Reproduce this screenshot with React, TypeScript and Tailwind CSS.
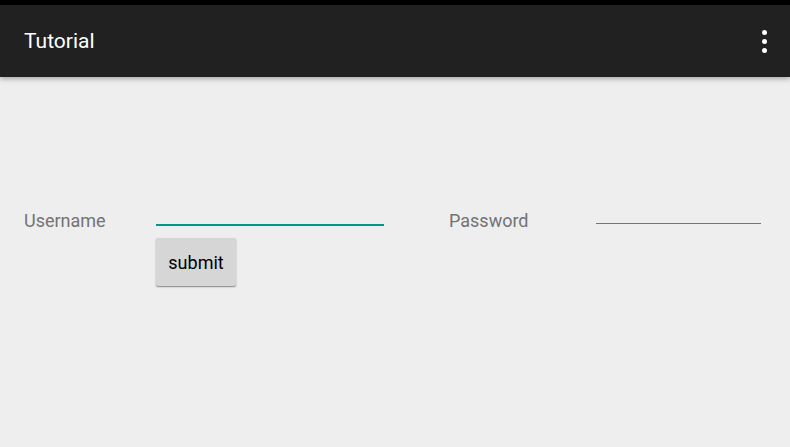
export default function App() {
  return (
    <div className="w-[790px] h-[447px] bg-[#eeeeee] overflow-hidden font-['Roboto',sans-serif] relative">
      {/* status bar */}
      <div className="h-[5px] bg-black" />
      {/* toolbar */}
      <div className="relative z-10 h-[72px] bg-[#212121] flex items-center justify-between pl-6 pr-[23px] shadow-[0_2px_5px_rgba(0,0,0,0.3)]">
        <span className="text-white text-[21px] leading-none">Tutorial</span>
        <div className="flex flex-col gap-[4px]">
          <span className="w-[5px] h-[5px] rounded-full bg-white" />
          <span className="w-[5px] h-[5px] rounded-full bg-white" />
          <span className="w-[5px] h-[5px] rounded-full bg-white" />
        </div>
      </div>

      <div className="pt-[130px] pl-6">
        <div className="flex items-start">
          <div className="w-[132px] text-[18px] leading-5 text-[#737373] pt-[4px]">Username</div>
          <div className="flex flex-col">
            <div className="w-[228px] h-[19px] border-b-2 border-[#009688]" />
            <button className="mt-[12px] w-[80px] h-[48px] bg-[#d6d6d6] rounded-[2px] shadow-[0_1px_1.5px_rgba(0,0,0,0.45)] text-[18px] text-black">
              submit
            </button>
          </div>
          <div className="ml-[65px] w-[147px] text-[18px] leading-5 text-[#737373] pt-[4px]">Password</div>
          <div className="w-[165px] h-[17px] border-b border-[#757575]" />
        </div>
      </div>
    </div>
  )
}
